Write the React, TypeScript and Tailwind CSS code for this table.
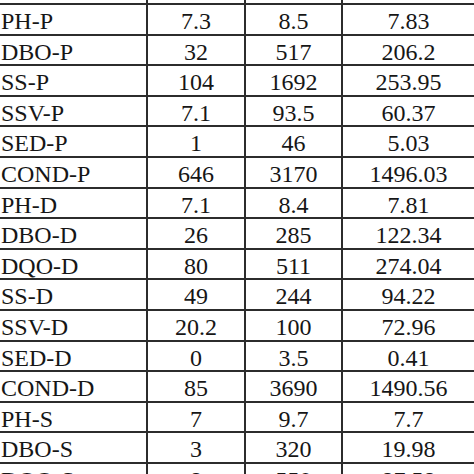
import React from "react";

const rows: [string, string, string, string][] = [
  ["PH-P", "7.3", "8.5", "7.83"],
  ["DBO-P", "32", "517", "206.2"],
  ["SS-P", "104", "1692", "253.95"],
  ["SSV-P", "7.1", "93.5", "60.37"],
  ["SED-P", "1", "46", "5.03"],
  ["COND-P", "646", "3170", "1496.03"],
  ["PH-D", "7.1", "8.4", "7.81"],
  ["DBO-D", "26", "285", "122.34"],
  ["DQO-D", "80", "511", "274.04"],
  ["SS-D", "49", "244", "94.22"],
  ["SSV-D", "20.2", "100", "72.96"],
  ["SED-D", "0", "3.5", "0.41"],
  ["COND-D", "85", "3690", "1490.56"],
  ["PH-S", "7", "9.7", "7.7"],
  ["DBO-S", "3", "320", "19.98"],
  ["DQO-S", "8", "550", "87.58"],
];

export default function App() {
  return (
    <div
      className="w-[474px] h-[474px] overflow-hidden bg-white text-[#161616]"
      style={{ fontFamily: '"Liberation Serif", "Times New Roman", serif' }}
    >
      <div className="grid grid-cols-[146px_98px_97px_133px] h-[3px]">
        <div />
        <div className="border-l-2 border-[#2c2c2c]" />
        <div className="border-l-2 border-[#2c2c2c]" />
        <div className="border-l-2 border-[#2c2c2c]" />
      </div>
      {rows.map((r, i) => (
        <div
          key={i}
          className="grid grid-cols-[146px_98px_97px_133px] h-[30.6px] border-t-2 border-[#2c2c2c] text-[24px] leading-[27px]"
        >
          <div className="pl-[1px] pt-[3px] whitespace-nowrap">{r[0]}</div>
          <div className="border-l-2 border-[#2c2c2c] text-center pt-[3px]">{r[1]}</div>
          <div className="border-l-2 border-[#2c2c2c] text-center pt-[3px]">{r[2]}</div>
          <div className="border-l-2 border-[#2c2c2c] text-center pt-[3px]">{r[3]}</div>
        </div>
      ))}
    </div>
  );
}
